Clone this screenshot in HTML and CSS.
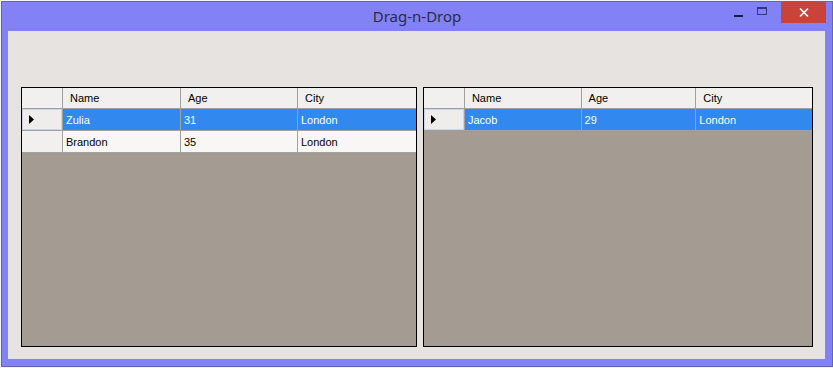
FILE: index.html
```html
<!DOCTYPE html>
<html>
<head>
<meta charset="UTF-8">
<title>Drag-n-Drop</title>
<link rel="stylesheet" href="styles.css">
</head>
<body>

	<div class="window">
		<div class="titlebar">
			<div></div>
			<div class="title">Drag-n-Drop</div>
			<div class="buttons">
				<div class="btn min"><span class="dash"></span></div>
				<div class="btn max"><span class="box"></span></div>
				<div class="btn close">
					<svg width="12" height="11" viewBox="0 0 12 11"><path d="M2 1.5 L10 9.5 M10 1.5 L2 9.5" stroke="#fff" stroke-width="1.7"/></svg>
				</div>
			</div>
		</div>

		<div class="client">
			<!-- 왼쪽 그리드 -->
			<div class="grid left">
				<div class="row head">
					<div class="cell rh"></div>
					<div class="cell c1">Name</div>
					<div class="cell c2">Age</div>
					<div class="cell c3">City</div>
				</div>
				<div class="row sel">
					<div class="cell rh"><svg width="5" height="9" viewBox="0 0 5 9"><polygon points="0,0 5,4.5 0,9" fill="#000"/></svg></div>
					<div class="cell c1">Zulia</div>
					<div class="cell c2">31</div>
					<div class="cell c3">London</div>
				</div>
				<div class="row">
					<div class="cell rh"></div>
					<div class="cell c1">Brandon</div>
					<div class="cell c2">35</div>
					<div class="cell c3">London</div>
				</div>
			</div>

			<!-- 오른쪽 그리드 -->
			<div class="grid right">
				<div class="row head">
					<div class="cell rh"></div>
					<div class="cell c1">Name</div>
					<div class="cell c2">Age</div>
					<div class="cell c3">City</div>
				</div>
				<div class="row sel">
					<div class="cell rh"><svg width="5" height="9" viewBox="0 0 5 9"><polygon points="0,0 5,4.5 0,9" fill="#000"/></svg></div>
					<div class="cell c1">Jacob</div>
					<div class="cell c2">29</div>
					<div class="cell c3">London</div>
				</div>
			</div>
		</div>
	</div>

</body>
</html>
```

FILE: styles.css
```css
* {
	box-sizing: border-box;
}
body {
	margin: 0;
	padding: 1px 0 0 1px;
	background: #f3f3f3;
	font-family: "Liberation Sans", Arial, sans-serif;
	font-size: 11px;
	color: #000;
}
.window {
	width: 832px;
	height: 366px;
	border: 1px solid #6464b4;
	background: #8282f6;
	padding: 0 7px 7px 6px;
	display: flex;
	flex-direction: column;
}
.titlebar {
	height: 29px;
	display: grid;
	grid-template-columns: 1fr auto 1fr;
	margin-right: -1px;
}
.title {
	font-family: "Noto Sans", "Open Sans", sans-serif;
	font-size: 15px;
	color: #2a2a48;
	line-height: 29px;
}
.buttons {
	display: flex;
	justify-content: flex-end;
	align-items: flex-start;
}
.btn {
	display: flex;
	align-items: center;
	justify-content: center;
	height: 21px;
}
.min {
	width: 26px;
}
.dash {
	width: 9px;
	height: 2px;
	background: #1c1c3c;
	margin-top: 6px;
	margin-left: 4px;
}
.max {
	width: 26px;
	margin-right: 6px;
}
.box {
	width: 10px;
	height: 8px;
	border: 1px solid #36367a;
	border-top-width: 2px;
	margin-top: -3px;
}
.close {
	width: 45px;
	background: #c9433b;
}
.client {
	height: 328px;
	background: #e6e3e0;
	padding: 56px 12px 12px 13px;
	display: flex;
	gap: 6px;
}
.grid {
	height: 260px;
	border: 1px solid #000;
	background: #a49b92;
}
.grid.left {
	width: 396px;
}
.grid.right {
	width: 390px;
}
.row {
	display: flex;
	height: 22px;
}
.row.head {
	height: 21px;
}
.cell {
	height: 100%;
	border-right: 1px solid #a0a0a0;
	border-bottom: 1px solid #a0a0a0;
	background: #f8f7f5;
	padding-left: 3px;
	display: flex;
	align-items: center;
	white-space: nowrap;
}
.cell:last-child {
	border-right: none;
}
.head .cell {
	background: #f1f0ee;
	padding-left: 7px;
}
.cell.rh {
	width: 41px;
	background: #f1f0ee;
	padding-left: 7px;
}
.sel .cell {
	background: #3189f0;
	color: #fff;
}
.sel .cell.rh {
	background: #eeedeb;
	box-shadow: inset 0 0 0 1px #c9d6e6;
}
.left .c1 { width: 118px; }
.left .c2 { width: 117px; }
.left .c3 { width: 118px; }
.right .c1 { width: 117px; }
.right .c2 { width: 115px; }
.right .c3 { width: 116px; }
```
